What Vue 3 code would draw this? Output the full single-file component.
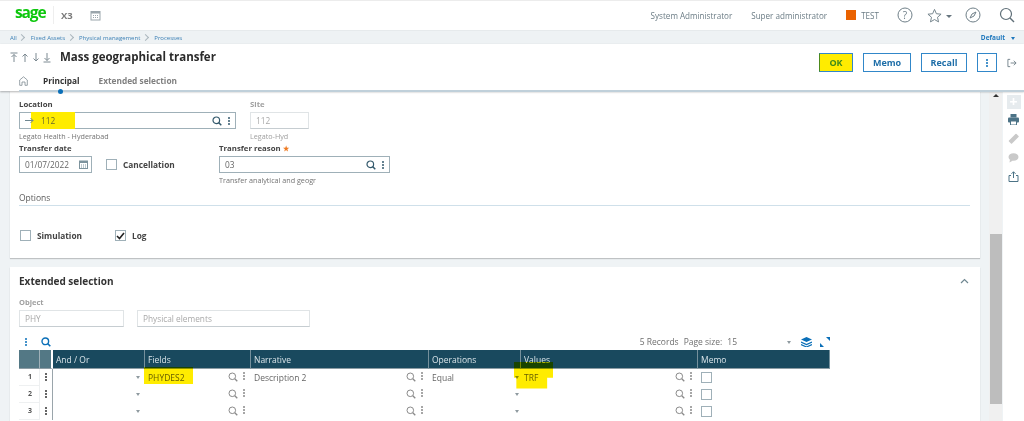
<script setup>
const rows = [
  { n: 1, field: 'PHYDES2', narrative: 'Description 2', op: 'Equal', value: 'TRF' },
  { n: 2, field: '', narrative: '', op: '', value: '' },
  { n: 3, field: '', narrative: '', op: '', value: '' },
]
const crumbs = ['All', 'Fixed Assets', 'Physical management', 'Processes']
</script>

<template>
  <div class="page">
    <header class="topbar">
      <span class="logo">sage</span>
      <span class="sep"></span>
      <span class="x3">X3</span>
      <svg class="cal" width="11" height="11" viewBox="0 0 11 11"><rect x="1" y="1.5" width="9" height="8.5" fill="none" stroke="#9aa5ab"/><rect x="1" y="1.5" width="9" height="2" fill="#9aa5ab"/><path d="M3 5.5h5M3 7.5h5" stroke="#9aa5ab" stroke-dasharray="1 1"/></svg>
      <span class="grow"></span>
      <span class="user u1">System Administrator</span>
      <span class="user u2">Super administrator</span>
      <span class="sq"></span>
      <span class="user u3">TEST</span>
      <svg class="ti i1" width="16" height="16" viewBox="0 0 16 16"><circle cx="8" cy="8" r="7" fill="none" stroke="#6f7f88"/><text x="8" y="11.5" text-anchor="middle" font-size="10" fill="#6f7f88" font-family="Open Sans">?</text></svg>
      <svg class="ti i2" width="15" height="15" viewBox="0 0 16 16"><path d="M8 1.5l2 4.600 5 .5-3.800 3.300 1.100 4.900L8 12.300 3.700 14.800l1.100-4.900L1 6.600l5-.5z" fill="none" stroke="#6f7f88"/></svg>
      <span class="caret i3"></span>
      <svg class="ti i4" width="16" height="16" viewBox="0 0 16 16"><circle cx="8" cy="8" r="7" fill="none" stroke="#6f7f88"/><path d="M11 5L9 9 5 11l2-4z" fill="none" stroke="#6f7f88"/></svg>
      <svg class="ti i5" width="16" height="16" viewBox="0 0 16 16"><circle cx="7" cy="7" r="5.500" fill="none" stroke="#5f6f78" stroke-width="1.200"/><path d="M11 11l4 4" stroke="#5f6f78" stroke-width="1.400"/></svg>
    </header>

    <nav class="crumbs">
      <template v-for="(c, i) in crumbs" :key="c">
        <span v-if="i" class="chev"></span>
        <span class="crumb">{{ c }}</span>
      </template>
      <span class="grow"></span>
      <span class="default">Default</span>
      <span class="mini-caret"></span>
    </nav>

    <section class="head">
      <div class="head-top">
        <div class="arrows">
          <svg width="10" height="11" viewBox="0 0 10 11"><path d="M1.500 1h7M5 10V2.500M2.500 5L5 2.500 7.500 5" fill="none" stroke="#7d8a92"/></svg>
          <svg width="10" height="11" viewBox="0 0 10 11"><path d="M5 10V2M2.500 4.500L5 2l2.500 2.500" fill="none" stroke="#7d8a92"/></svg>
          <svg width="10" height="11" viewBox="0 0 10 11"><path d="M5 1v8M2.500 6.500L5 9l2.500-2.500" fill="none" stroke="#7d8a92"/></svg>
          <svg width="10" height="11" viewBox="0 0 10 11"><path d="M1.500 10h7M5 1v7.500M2.500 6L5 8.500 7.500 6" fill="none" stroke="#7d8a92"/></svg>
        </div>
        <h1>Mass geographical transfer</h1>
        <span class="grow"></span>
        <button class="btn ok">OK</button>
        <button class="btn memo">Memo</button>
        <button class="btn recall">Recall</button>
        <button class="btn more"><span class="dots blue"></span></button>
        <svg class="exit" width="10" height="10" viewBox="0 0 11 10"><path d="M3.500 1H1v8h2.500M4 5h6M7.500 2.500L10 5 7.500 7.500" fill="none" stroke="#6f7f88"/></svg>
      </div>
      <div class="tabs">
        <svg class="home" width="9" height="10" viewBox="0 0 9 10"><path d="M.7 9.300V4L4.500.8 8.300 4v5.300H6V6H3v3.300z" fill="none" stroke="#7d8a92" stroke-width=".8"/></svg>
        <span class="tab active">Principal<i class="dot"></i></span>
        <span class="tab">Extended selection</span>
      </div>
    </section>

    <div class="body">
      <main class="content">
        <section class="card first">
          <div class="row r1">
            <div class="field loc">
              <label>Location</label>
              <div class="input">
                <span class="hl hl-loc"></span>
                <svg class="arr" width="9" height="7" viewBox="0 0 9 7"><path d="M0 3.500h8M5.500 1L8 3.500 5.500 6" fill="none" stroke="#6f8791"/></svg>
                <span class="val v112">112</span>
                <span class="grow"></span>
                <svg class="lens" width="10" height="10" viewBox="0 0 10 10"><circle cx="4.300" cy="4.300" r="3.300" fill="none" stroke="#33596c" stroke-width="1.200"/><path d="M6.800 6.800L9.300 9.300" stroke="#33596c" stroke-width="1.500"/></svg>
                <span class="dots"></span>
              </div>
              <small>Legato Health - Hyderabad</small>
            </div>
            <div class="field site">
              <label class="muted">Site</label>
              <div class="input off"><span class="val">112</span></div>
              <small class="muted">Legato-Hyd</small>
            </div>
          </div>

          <div class="row r2">
            <div class="field date">
              <label>Transfer date</label>
              <div class="input">
                <span class="val">01/07/2022</span>
                <span class="grow"></span>
                <svg width="9" height="9" viewBox="0 0 9 9"><rect x=".5" y="1" width="8" height="7.500" fill="none" stroke="#7d939d"/><rect x=".5" y="1" width="8" height="2" fill="#7d939d"/><path d="M2 5h5M2 7h5" stroke="#7d939d" stroke-dasharray="1 1"/></svg>
              </div>
            </div>
            <div class="check cancel"><span class="box"></span><b>Cancellation</b></div>
            <div class="field reason">
              <label>Transfer reason <em>★</em></label>
              <div class="input">
                <span class="val">03</span>
                <span class="grow"></span>
                <svg class="lens" width="10" height="10" viewBox="0 0 10 10"><circle cx="4.300" cy="4.300" r="3.300" fill="none" stroke="#33596c" stroke-width="1.200"/><path d="M6.800 6.800L9.300 9.300" stroke="#33596c" stroke-width="1.500"/></svg>
                <span class="dots"></span>
              </div>
              <small>Transfer analytical and geogr</small>
            </div>
          </div>

          <div class="options">Options</div>
          <div class="row r3">
            <div class="check sim"><span class="box"></span><b>Simulation</b></div>
            <div class="check"><span class="box on">
              <svg width="9" height="8" viewBox="0 0 9 8"><path d="M1 4l2.500 2.500L8 1" fill="none" stroke="#222" stroke-width="1.600"/></svg>
            </span><b>Log</b></div>
          </div>
        </section>

        <section class="card second">
          <div class="sec-head">
            <h2>Extended selection</h2>
            <svg width="9" height="6" viewBox="0 0 9 6"><path d="M1 5l3.500-3.500L8 5" fill="none" stroke="#6f8791" stroke-width="1.200"/></svg>
          </div>
          <label class="muted obj">Object</label>
          <div class="row r4">
            <div class="input off o1"><span class="val">PHY</span></div>
            <div class="input off o2"><span class="val">Physical elements</span></div>
          </div>
          <div class="grid-tools">
            <span class="dots blue"></span>
            <svg class="glens" width="10" height="10" viewBox="0 0 10 10"><circle cx="4.300" cy="4.300" r="3.300" fill="none" stroke="#0a6fb8" stroke-width="1.400"/><path d="M6.800 6.800L9.300 9.300" stroke="#0a6fb8" stroke-width="1.600"/></svg>
            <span class="grow"></span>
            <span class="rec">5 Records</span>
            <span class="rec ps">Page size:</span>
            <span class="rec">15</span>
            <span class="mini-caret gray"></span>
            <svg class="stack" width="11" height="10" viewBox="0 0 11 10"><path d="M5.500 0L11 2.500 5.500 5 0 2.500z" fill="#0a6fb8"/><path d="M0 5l5.500 2.500L11 5M0 7.500L5.500 10 11 7.500" fill="none" stroke="#0a6fb8" stroke-width="1.200"/></svg>
            <svg class="expand" width="10" height="10" viewBox="0 0 10 10"><path d="M6 0h4v4zM0 10V6l4 4z" fill="#0a6fb8"/></svg>
          </div>
          <div class="table">
            <div class="tr th">
              <span class="c-n"></span><span class="c-m"></span>
              <span class="c-a">And / Or</span><span class="c-f">Fields</span><span class="c-d">Narrative</span>
              <span class="c-o">Operations</span><span class="c-v">Values</span><span class="c-e">Memo</span>
            </div>
            <div v-for="r in rows" :key="r.n" class="tr td">
              <span class="c-n">{{ r.n }}</span>
              <span class="c-m"><span class="dots dark"></span></span>
              <span class="c-a"><i class="mini-caret gray"></i></span>
              <span class="c-f">
                <span v-if="r.field" class="mark mark-f">{{ r.field }}</span>
                <span class="grow"></span>
                <svg width="10" height="10" viewBox="0 0 10 10"><circle cx="4.300" cy="4.300" r="3.300" fill="none" stroke="#8a8a8a"/><path d="M6.800 6.800L9.300 9.300" stroke="#8a8a8a" stroke-width="1.300"/></svg>
                <span class="dots gray"></span>
              </span>
              <span class="c-d">
                {{ r.narrative }}
                <span class="grow"></span>
                <svg width="10" height="10" viewBox="0 0 10 10"><circle cx="4.300" cy="4.300" r="3.300" fill="none" stroke="#8a8a8a"/><path d="M6.800 6.800L9.300 9.300" stroke="#8a8a8a" stroke-width="1.300"/></svg>
                <span class="dots gray"></span>
              </span>
              <span class="c-o">{{ r.op }}<i class="mini-caret gray"></i></span>
              <span class="c-v">
                <span v-if="r.value" class="mark mark-v">{{ r.value }}</span>
                <span class="grow"></span>
                <svg width="10" height="10" viewBox="0 0 10 10"><circle cx="4.300" cy="4.300" r="3.300" fill="none" stroke="#8a8a8a"/><path d="M6.800 6.800L9.300 9.300" stroke="#8a8a8a" stroke-width="1.300"/></svg>
                <span class="dots gray"></span>
              </span>
              <span class="c-e"><span class="box"></span></span>
            </div>
          </div>
        </section>
      </main>

      <div class="scroll">
        <span class="up"></span>
        <span class="thumb"></span>
      </div>

      <aside class="rail">
        <span class="plus">+</span>
        <svg width="11" height="11" viewBox="0 0 11 11"><rect x="2.500" y="0" width="6" height="3.500" fill="#4c7386"/><rect x="0" y="3.500" width="11" height="5" rx="1" fill="#4c7386"/><rect x="2.500" y="7" width="6" height="4" fill="#fff" stroke="#4c7386"/></svg>
        <svg width="11" height="11" viewBox="0 0 11 11"><path d="M1.500 8L8 1.500l2 2L3.500 10z" fill="#c9c9c9" stroke="#c9c9c9" stroke-width="1.500" stroke-linejoin="round"/></svg>
        <svg width="11" height="11" viewBox="0 0 11 10"><ellipse cx="5.500" cy="4.500" rx="5" ry="3.800" fill="#c9c9c9"/><path d="M2 7L1.500 10 5 8z" fill="#c9c9c9"/></svg>
        <svg width="11" height="11" viewBox="0 0 11 11"><path d="M3 4.500H1v6h9v-6H8M5.500 7V.8M3.500 2.800l2-2 2 2" fill="none" stroke="#4c7386"/></svg>
      </aside>
    </div>
  </div>
</template>

<style scoped>
.page { width: 1024px; height: 421px; overflow: hidden; background: #fff; font-family: "Open Sans", "Noto Sans", sans-serif; color: #4d4d4d; display: flex; flex-direction: column; }
.grow { flex: 1; }
.topbar { height: 30px; box-sizing: border-box; border-top: 1px solid #ececec; flex: none; display: flex; align-items: center; background: #fff; padding-bottom: 1px; }
.logo { margin-left: 15px; color: #0dc70d; font: 700 15.5px/1 "Open Sans", sans-serif; letter-spacing: -1.100px; position: relative; top: -2px; width: 32px; }
.sep { width: 1px; height: 18px; background: #eee; margin-left: 6px; }
.x3 { margin-left: 7px; font-weight: 700; font-size: 9.500px; color: #7b7b7b; }
.cal { margin-left: 17px; }
.user { font-size: 8.100px; color: #6b7c85; white-space: nowrap; }
.u2 { margin-left: 19px; }
.sq { width: 10px; height: 10px; background: #ea6200; margin-left: 19px; }
.u3 { margin-left: 5px; }
.ti { flex: none; }
.i1 { margin-left: 18px; }
.i2 { margin-left: 14px; }
.caret { width: 0; height: 0; border: 3px solid transparent; border-top: 3px solid #66757e; }
.i3 { margin: 6px 0 0 4px; }
.i4 { margin-left: 13px; }
.i5 { margin: 0 9px 0 18px; }
.crumbs { height: 14px; flex: none; background: #eef2f4; border-top: 1px solid #e6eaec; display: flex; align-items: center; padding: 0 9px 0 10px; font-size: 6px; color: #3a7fb5; box-sizing: border-box; }
.chev { width: 4px; height: 4px; border-top: 1px solid #aab6bc; border-right: 1px solid #aab6bc; transform: rotate(45deg); margin: 0 6.500px 0 2.500px; }
.default { font-weight: 700; color: #1f78bd; font-size: 6.500px; }
.mini-caret { display: inline-block; width: 0; height: 0; border: 2.500px solid transparent; border-top: 3px solid #1f78bd; margin: 3px 0 0 6px; }
.mini-caret.gray { border-top-color: #8f9aa0; }
.head { height: 47px; flex: none; background: #fff; display: flex; flex-direction: column; box-shadow: 0 1px 2px rgba(0,0,0,.3); position: relative; z-index: 2; }
.head-top { height: 27px; display: flex; align-items: center; padding-right: 7px; }
.arrows { display: flex; margin-left: 9px; width: 51px; gap: 1px; margin-top: -1px; }
h1 { margin: 0 0 3px; font-size: 11.500px; font-weight: 700; color: #2b2b2b; white-space: nowrap; }
.btn { font: 700 9px "Open Sans", sans-serif; height: 19px; background: #fff; border: 1px solid #3187c9; color: #1e6ea8; padding: 0; margin-top: 10px; box-sizing: border-box; }
.ok { width: 34px; background: #ffec00; color: #3d8a1b; border-left-color: #4d8a1b; }
.memo { width: 48px; margin-left: 10px; }
.recall { width: 46px; margin-left: 10px; }
.more { width: 20px; margin-left: 10px; display: flex; align-items: center; justify-content: center; }
.exit { margin: 10px 0 0 10px; }
.tabs { height: 19px; margin-left: 19px; display: flex; align-items: flex-start; border-bottom: 2px solid #c0d0da; }
.home { margin: 5px 0 0; }
.tab { font-size: 8.300px; font-weight: 700; color: #808080; margin-left: 15px; line-height: 19px; position: relative; white-space: nowrap; }
.tab + .tab { margin-left: 19px; }
.tab.active { color: #333; }
.dot { position: absolute; left: 15px; bottom: -4px; width: 5px; height: 5px; border-radius: 50%; background: #0a6fb8; }
.body { flex: 1; min-height: 0; display: flex; background: #eff3f5; }
.content { width: 980px; padding-left: 10px; box-sizing: border-box; flex: none; }
.card { width: 970px; background: #fff; box-sizing: border-box; box-shadow: 0 1px 1px rgba(0,0,0,.2); padding: 0 9px; }
.first { height: 167px; padding-top: 9px; }
.second { height: 160px; margin-top: 9px; padding-top: 7px; }
.row { display: flex; }
label { display: block; font-size: 7.800px; font-weight: 700; color: #444; line-height: 9px; height: 9px; white-space: nowrap; }
.muted { color: #a0a0a0; }
.input { height: 17px; box-sizing: border-box; border: 1px solid #9fb0b8; margin-top: 3px; display: flex; align-items: center; padding: 0 3px 0 5px; position: relative; background: #fff; gap: 4px; }
.input.off { border-color: #e0e4e6; border-bottom-color: #c6cdd1; }
.val { font-size: 8.300px; color: #666; position: relative; }
.off .val { color: #a9a9a9; }
small { display: block; font-size: 7.200px; color: #737373; line-height: 10px; margin-top: 2px; white-space: nowrap; }
.loc { width: 217px; }
.site { width: 59px; margin-left: 14px; }
.hl { position: absolute; left: 11px; top: -1px; width: 44px; height: 17px; background: #ffec00; }
.arr { position: relative; }
.v112 { margin-left: 3px; color: #6b6b2a; }
.r2 { margin-top: 3px; height: 40px; }
.date { width: 73px; }
.reason { width: 171px; margin-left: 14px; }
.reason em { color: #ee7a22; font-style: normal; font-size: 7px; }
.check { display: flex; align-items: center; font-size: 8.500px; }
.check b { margin-left: 6px; color: #444; font-weight: 700; font-size: 8.300px; }
.cancel { width: 99px; margin-left: 14px; height: 18px; margin-top: 11px; }
.box { display: inline-flex; align-items: center; justify-content: center; width: 11px; height: 11px; box-sizing: border-box; border: 1px solid #9fb0b8; background: #fff; flex: none; }
.options { font-size: 8.500px; color: #5c5c5c; border-bottom: 1px solid #cfe0ea; height: 14px; line-height: 13px; width: 951px; margin-top: 7px; }
.r3 { margin-top: 24px; }
.sim { width: 95px; margin-left: 1px; }
.sec-head { display: flex; align-items: center; justify-content: space-between; padding-right: 2px; height: 13px; }
h2 { margin: 0; font-size: 10px; font-weight: 700; color: #333; }
.obj { margin-top: 11px; font-size: 7.500px; }
.o1 { width: 105px; margin-top: 3px; }
.o2 { width: 173px; margin-left: 13px; margin-top: 3px; }
.grid-tools { width: 811px; height: 17px; margin-top: 6px; display: flex; align-items: center; padding-left: 4px; box-sizing: border-box; }
.glens { margin-left: 12px; }
.stack { margin-left: 10px; }
.expand { margin-left: 8px; }
.rec { font-size: 8.500px; color: #6e6e6e; white-space: nowrap; }
.ps { margin: 0 5px 0 5px; }
.grid-tools .mini-caret { margin-left: 50px; }
.table { width: 811px; }
.tr { display: flex; }
.tr > span { box-sizing: border-box; flex: none; display: flex; align-items: center; white-space: nowrap; }
.c-n { width: 21px; }
.c-m { width: 13px; }
.c-a { width: 92px; }
.c-f { width: 106px; }
.c-d { width: 178px; }
.c-o { width: 92px; }
.c-v { width: 177px; }
.c-e { width: 132px; }
.th { height: 19px; }
.th > span { background: #19495e; color: #d9e4e9; font-size: 8.500px; padding-left: 3px; border-right: 1px solid #75909c; border-bottom: 1px solid #8c9ca4; }
.th > .c-n { background: #537885; border-right: 1px solid #9fb0b8; }
.th > .c-m { background: #537885; border-right: 2px solid #fff; }
.td { height: 17px; font-size: 8.500px; color: #666; }
.td > span { padding-bottom: 1px; }
.td > .c-n { justify-content: flex-end; padding-right: 7px; font-size: 7px; font-weight: 700; color: #555; border-bottom: 1px solid #eef0f1; border-right: 1px solid #eef0f1; }
.td > .c-m { justify-content: center; border-right: 1px solid #9aa5ab; }
.td > .c-a { justify-content: flex-end; padding-right: 3px; }
.td > .c-f, .td > .c-d, .td > .c-v { padding-left: 3px; padding-right: 4px; gap: 3px; }
.td > .c-o { padding-left: 3px; }
.td > .c-o .mini-caret { margin-left: auto; }
.td > .c-e { padding-left: 3px; }
.td .mini-caret { margin: 3px 2px 0 0; }
.mark { position: relative; color: #666; }
.mark::after { content: ""; position: absolute; background: #ffec00; mix-blend-mode: multiply; }
.mark-f::after { left: -4px; top: -5px; width: 49px; height: 17px; }
.mark-v::after { left: -10px; top: -10px; width: 39px; height: 27px; clip-path: polygon(0 0, 100% 0, 100% 60%, 85% 60%, 85% 100%, 6% 100%, 6% 60%, 0 60%); }
.dots { display: inline-block; width: 2px; height: 2px; border-radius: 50%; background: #33596c; box-shadow: 0 -3px 0 #33596c, 0 3px 0 #33596c; margin: 0 2px; flex: none; }
.dots.blue { background: #0a6fb8; box-shadow: 0 -3px 0 #0a6fb8, 0 3px 0 #0a6fb8; }
.dots.dark { background: #333; box-shadow: 0 -3px 0 #333, 0 3px 0 #333; }
.dots.gray { background: #8a8a8a; box-shadow: 0 -3px 0 #8a8a8a, 0 3px 0 #8a8a8a; margin-top: -3px; }
.scroll { width: 13px; margin-left: 9px; height: 100%; flex: none; background: #f0f0f0; display: flex; flex-direction: column; align-items: center; }
.up { width: 0; height: 0; border: 3px solid transparent; border-bottom: 3px solid #333; }
.thumb { width: 12px; height: 170px; background: #bdbdbd; margin-top: 137px; margin-left: 1px; }
.rail { flex: 1; background: #fff; display: flex; flex-direction: column; align-items: center; gap: 8px; padding-top: 4px; margin-left: 1px; }
.plus { width: 14px; height: 14px; background: #e6ebee; color: #fff; font-size: 14px; font-weight: 700; line-height: 14px; text-align: center; margin-bottom: -3px; }
</style>
